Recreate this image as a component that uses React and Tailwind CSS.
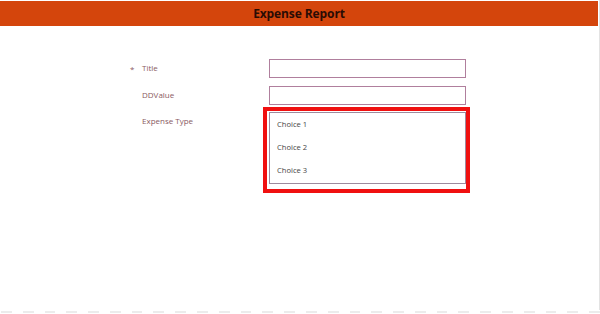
import React from "react";

const fields = [
  { label: "Title", required: true },
  { label: "DDValue", required: false },
];

const choices = ["Choice 1", "Choice 2", "Choice 3"];

export default function App() {
  return (
    <div className="w-[600px] h-[314px] bg-white overflow-hidden flex flex-col font-['Open_Sans',sans-serif]">
      <div className="flex-1 flex flex-col border-r border-[#e3e3e3]">
        <header className="mt-px h-[25px] mr-[1px] bg-[#d4450c] flex items-center justify-center">
          <h1 className="text-[12px] font-bold text-[#2a0c04] tracking-[-0.1px]">
            Expense Report
          </h1>
        </header>

        <main className="pt-[33px] flex flex-col gap-[8px]">
          {fields.map((f) => (
            <div key={f.label} className="flex items-center h-[19px]">
              <div className="w-[142px] pl-[130px] text-[8px] text-[#8a5a62]">
                {f.required ? "*" : ""}
              </div>
              <div className="w-[127px] text-[8px] text-[#8a5a62] mt-[-1px]">{f.label}</div>
              <div className="w-[197px] h-[19px] border border-[#b07f9d] bg-white" />
            </div>
          ))}

          <div className="flex items-start mt-[-1px]">
            <div className="w-[142px]" />
            <div className="w-[127px] pt-[3px] text-[8px] text-[#8a5a62]">Expense Type</div>
            <div className="relative w-[197px] h-[72px]">
              <ul className="h-full border border-[#9e8a9e] bg-white pt-[5px] pl-[7px] flex flex-col gap-[10px]">
                {choices.map((c) => (
                  <li key={c} className="text-[7.6px] leading-[13px] text-[#454545]">
                    {c}
                  </li>
                ))}
              </ul>
              <div className="absolute -left-[6px] -top-[5px] -right-[4px] -bottom-[9px] border-4 border-[#f01010] pointer-events-none" />
            </div>
          </div>
        </main>
      </div>

      <div className="h-[4px] flex gap-[11px] pl-[1px] pt-[1px] pb-[1px]">
        {Array.from({ length: 28 }).map((_, i) => (
          <div key={i} className="w-[11px] h-[2px] bg-[#ececec]" />
        ))}
      </div>
    </div>
  );
}
